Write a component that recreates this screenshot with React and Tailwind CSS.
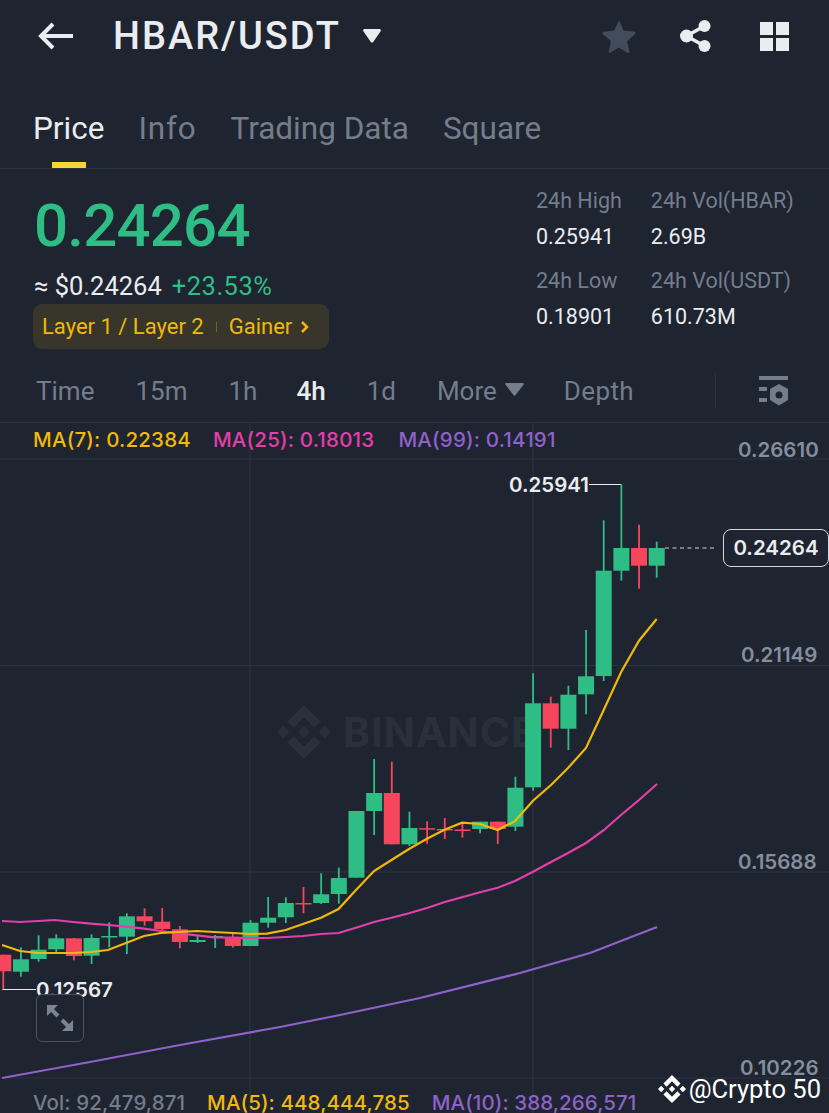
import { SiBinance } from 'react-icons/si'

const GREEN = '#2ebd85'
const RED = '#f6465d'

// k = bars back from the latest one. high, top, bottom, low are page y values.
const candles = [
  [541.7, 548, 565.7, 577.7, 'g'],
  [524.7, 548, 565.7, 588.7, 'r'],
  [484.3, 548, 570.7, 580.7, 'g'],
  [520.3, 570.7, 676, 681, 'g'],
  [630, 676.3, 694.3, 714.3, 'g'],
  [685.7, 694.7, 728.7, 750, 'g'],
  [696.7, 703.3, 728.7, 747.7, 'r'],
  [673.3, 703.3, 787.3, 790.7, 'g'],
  [776.7, 787.7, 826.7, 831, 'g'],
  [821.7, 821.7, 829, 844, 'r'],
  [821.7, 821.7, 829, 833.3, 'g'],
  [823, 829.5, 831, 837.7, 'r'],
  [818, 829, 830.5, 839, 'r'],
  [821.3, 828.2, 829.7, 843.7, 'r'],
  [811.7, 828, 844.3, 846, 'g'],
  [761.7, 793, 844.3, 844.3, 'r'],
  [759, 793, 811, 835, 'g'],
  [811, 811, 877.7, 877.7, 'g'],
  [867.7, 878, 894, 903.7, 'g'],
  [873.3, 894.3, 903, 904, 'g'],
  [887, 903, 904.5, 913.3, 'r'],
  [897.3, 903, 917.3, 923, 'g'],
  [897, 917.7, 922.7, 927.7, 'g'],
  [920, 922.7, 946, 946, 'g'],
  [934, 938, 946, 947.7, 'r'],
  [935, 936, 937.5, 948, 'g'],
  [935, 940, 942, 943, 'g'],
  [926, 929.3, 942, 948.3, 'r'],
  [908, 921.7, 929, 930, 'r'],
  [908.3, 916.3, 921.3, 925.7, 'r'],
  [913.3, 916.3, 936.7, 954, 'g'],
  [922.3, 936, 937.5, 947.3, 'g'],
  [934.3, 938, 955.7, 964, 'g'],
  [938, 938.3, 956, 960.3, 'r'],
  [934.3, 938.3, 949.3, 952, 'g'],
  [935.3, 949.7, 959, 961.7, 'g'],
  [947.3, 959.3, 971.7, 976.7, 'g'],
  [954.7, 954.7, 971.3, 989.3, 'r'],
]

const ma7 = '2,945 20,951 38,953 55,953 73,953 91,952 108,950 126,943 144,936 161,933 179,932 197,931 214,932 233,933 250,934 267,933.7 285.7,930 303,924 321,917.7 338.5,909 356,890 374,871 391.5,860 409,849 427,838.7 444,830 462,822.7 480,824 497.7,830 515,821 533,800.7 551,785 568,768 586,748 603.7,710 621.3,671.7 639,640.7 656.7,619'
const ma25 = '2,921 20,922 38,921 55,920 73,922 91,923.7 108,925 126,926.7 144,928.7 161,931 179,933.3 197,935.3 214,937.3 233,937.7 250,938 267,938 285.7,937 303,936 321,934 338.5,933 356,927.7 374,922 391.5,917.7 409,913.3 427,908 444,902.3 462,897.3 480,892.3 497.7,887.7 515,881 533,871.7 551,862 568,853 586,843 604,830 621,815 639,800 657,784'
const ma99 = '2,1078 90,1062 180,1045 280,1027 340,1015 420,998 520,973 590,953 657,927'

function ChartDrawing() {
  return (
    <svg className="absolute inset-0" width="829" height="690" viewBox="0 423 829 690">
      <g stroke="#2c3340" strokeWidth="1.2">
        <line x1="0" x2="829" y1="459" y2="459" />
        <line x1="0" x2="829" y1="665.5" y2="665.5" />
        <line x1="0" x2="829" y1="872" y2="872" />
        <line x1="0" x2="829" y1="1078" y2="1078" />
        <line x1="250" x2="250" y1="423" y2="1113" />
        <line x1="533" x2="533" y1="423" y2="1113" />
      </g>
      <line x1="589" x2="621.3" y1="484.5" y2="484.5" stroke="#eaecef" strokeWidth="1" />
      <polyline points="36,989.5 2.3,989.5" fill="none" stroke="#eaecef" strokeWidth="1" />
      {candles.map(([high, top, bottom, low, side], k) => {
        const x = 656.7 - 17.66 * k
        const color = side === 'g' ? GREEN : RED
        return (
          <g key={k} fill={color}>
            <rect x={x - 0.9} y={high} width="1.8" height={low - high} />
            <rect x={x - 8} y={top} width="16" height={bottom - top} />
          </g>
        )
      })}
      <polyline points={ma99} fill="none" stroke="#8f62c9" strokeWidth="2.2" />
      <polyline points={ma25} fill="none" stroke="#e33fa9" strokeWidth="2.2" />
      <polyline points={ma7} fill="none" stroke="#f0b90b" strokeWidth="2.2" />
      <line x1="665" x2="714" y1="548" y2="548" stroke="#d5d8dc" strokeWidth="1" strokeDasharray="4 3.5" />
    </svg>
  )
}

function Watermark() {
  return (
    <div className="absolute left-[277px] top-[282px] flex items-center gap-[12px] text-[#2a303b]">
      <SiBinance size={54} />
      <span className="font-['Inter',sans-serif] text-[41px] font-bold tracking-[1px] leading-none">BINANCE</span>
    </div>
  )
}

function PriceTag({ className, children }) {
  return (
    <span className={`absolute font-['Inter',sans-serif] text-[20.5px] font-semibold leading-none text-[#848e9c] ${className}`}>
      {children}
    </span>
  )
}

function Stat({ label, value }) {
  return (
    <div className="flex flex-col whitespace-nowrap">
      <span className="text-[21.5px] leading-[28px] text-[#747d8c]">{label}</span>
      <span className="mt-[8px] text-[21.5px] leading-[28px] text-[#eaecef]">{value}</span>
    </div>
  )
}

export default function App() {
  return (
    <div className="w-[829px] h-[1113px] overflow-hidden flex flex-col bg-[#1e2430] text-[#eaecef] font-['Roboto',sans-serif]">
      {/* top bar */}
      <div className="h-[72px] flex items-center pl-[38px] pr-[40px] shrink-0">
        <svg width="36" height="28" viewBox="0 0 36 28" fill="none" stroke="#eaecef" strokeWidth="4">
          <path d="M35 14H3" />
          <path d="M15 2L3 14l12 12" />
        </svg>
        <span className="ml-[39px] text-[38px] font-medium leading-none tracking-[2px]">HBAR/USDT</span>
        <svg className="ml-[22px]" width="18" height="14" viewBox="0 0 18 14" fill="#eaecef">
          <path d="M1.500 0h15c1.200 0 1.800 1.200 1.100 2.200L10.200 13c-.6.800-1.800.800-2.400 0L.4 2.200C-.3 1.200.3 0 1.500 0z" />
        </svg>
        <svg className="ml-auto" width="34" height="34" viewBox="0 0 24 24" fill="#434c5a">
          <path d="M12 .8l3.300 7.400 7.700.8c.7.100 1 1 .4 1.500l-5.700 5.200 1.600 7.400c.1.700-.6 1.200-1.200.9L12 20.200 5.900 23.800c-.6.300-1.300-.2-1.200-.9l1.600-7.400L.6 10.500C0 10 .3 9.100 1 9l7.700-.8L12 .8z" />
        </svg>
        <svg className="ml-[43px]" width="34" height="34" viewBox="0 0 34 34" fill="#eaecef" stroke="#eaecef">
          <circle cx="25.500" cy="7" r="6" stroke="none" />
          <circle cx="7.500" cy="17" r="6.500" stroke="none" />
          <circle cx="25.500" cy="27" r="6" stroke="none" />
          <path d="M25.500 7L7.500 17l18 10" fill="none" strokeWidth="3.500" />
        </svg>
        <div className="ml-[47px] grid grid-cols-2 gap-[3px] w-[29px]">
          <div className="h-[13px] bg-[#eaecef]" />
          <div className="h-[13px] bg-[#eaecef]" />
          <div className="h-[13px] bg-[#eaecef]" />
          <div className="h-[13px] bg-[#eaecef]" />
        </div>
      </div>

      {/* tabs */}
      <div className="h-[97px] shrink-0 flex items-start gap-[34px] pl-[33px] pt-[37px] border-b border-[#2c3340] text-[31.5px] leading-[40px] text-[#747d8c]">
        <div className="relative h-[59px] text-[#eaecef]">
          Price
          <div className="absolute left-[19px] top-[53px] w-[34px] h-[6px] bg-[#fcd535]" />
        </div>
        <span className="tracking-[0.8px]">Info</span>
        <span>Trading Data</span>
        <span>Square</span>
      </div>

      {/* ticker */}
      <div className="h-[188px] shrink-0 flex pl-[33px]">
        <div className="flex flex-col w-[296px] shrink-0">
          <div className="mt-[24px] text-[60px] font-medium leading-[66px] tracking-[-0.8px] pl-[1px] text-[#2ebd85]">0.24264</div>
          <div className="mt-[12px] flex items-center text-[25.5px] leading-[30px] pl-[1px]">
            <span>≈ $0.24264</span>
            <span className="ml-[10px] tracking-[0.5px] text-[#2ebd85]">+23.53%</span>
          </div>
          <div className="mt-[3px] w-[296px] h-[45px] flex items-center rounded-[9px] bg-[#38352a] pl-[9px] text-[22px] text-[#f0b90b]">
            <span>Layer 1 / Layer 2</span>
            <span className="mx-[12px] w-[1px] h-[10px] bg-[#6d6232]" />
            <span>Gainer</span>
            <svg className="ml-[8px]" width="10" height="14" viewBox="0 0 10 14" fill="none" stroke="#f0b90b" strokeWidth="2.500">
              <path d="M2 2l5 5-5 5" />
            </svg>
          </div>
        </div>
        <div className="ml-[207px] mt-[18px] flex gap-[29px]">
          <div className="flex flex-col gap-[16px]">
            <Stat label="24h High" value="0.25941" />
            <Stat label="24h Low" value="0.18901" />
          </div>
          <div className="flex flex-col gap-[16px]">
            <Stat label="24h Vol(HBAR)" value="2.69B" />
            <Stat label="24h Vol(USDT)" value="610.73M" />
          </div>
        </div>
      </div>

      {/* intervals */}
      <div className="h-[66px] shrink-0 flex items-center pl-[36px] pt-[2px] text-[26px] text-[#747d8c]">
        <span>Time</span>
        <span className="ml-[41px]">15m</span>
        <span className="ml-[41px]">1h</span>
        <span className="ml-[39px] font-medium text-[#eaecef]">4h</span>
        <span className="ml-[41px]">1d</span>
        <span className="ml-[41px]">More</span>
        <svg className="ml-[8px] mb-[4px]" width="19" height="13" viewBox="0 0 19 13" fill="#747d8c">
          <path d="M1 0h17c.8 0 1.200.8.7 1.400L10.200 12.400c-.4.500-1 .500-1.400 0L.3 1.400C-.2.8.2 0 1 0z" />
        </svg>
        <span className="ml-[40px] tracking-[0.4px]">Depth</span>
        <div className="ml-[81px] w-[1px] h-[36px] bg-[#2c3340]" />
        <svg className="ml-[43px]" width="30" height="30" viewBox="0 0 30 30" fill="#747d8c">
          <rect x="0" y="0" width="29" height="4" />
          <rect x="0" y="11" width="8" height="4" />
          <rect x="0" y="22" width="8" height="4" />
          <path fillRule="evenodd" d="M20 8l9 5v11l-9 5.500-9-5.500V13l9-5zm0 7.500a3.500 3.500 0 100 7 3.500 3.500 0 000-7z" />
        </svg>
      </div>

      {/* chart */}
      <div className="relative flex-1 border-t border-[#2c3340] -mt-[1px] font-['Inter',sans-serif]">
        <Watermark />
        <ChartDrawing />

        <div className="relative flex items-center h-[35px] pl-[33px] text-[20.5px] font-medium leading-none tracking-[0.2px]">
          <span className="text-[#f0b90b]">MA(7): 0.22384</span>
          <span className="ml-[22px] text-[#e33fa9]">MA(25): 0.18013</span>
          <span className="ml-[24px] text-[#8f62c9]">MA(99): 0.14191</span>
        </div>

        <PriceTag className="left-[738px] top-[17px]">0.26610</PriceTag>
        <PriceTag className="left-[741px] top-[222px]">0.21149</PriceTag>
        <PriceTag className="left-[738px] top-[429px]">0.15688</PriceTag>
        <PriceTag className="left-[740px] top-[635px]">0.10226</PriceTag>

        <PriceTag className="left-[509px] top-[52px] !text-[#eaecef]">0.25941</PriceTag>
        <PriceTag className="left-[36px] top-[557px] !text-[#eaecef]">0.12567</PriceTag>

        <div className="absolute left-[723px] top-[106px] w-[106px] h-[38px] flex items-center justify-center rounded-[8px] border-[1.5px] border-[#d5d8dc] bg-[#1e2430] text-[20.5px] font-semibold text-[#eaecef]">
          0.24264
        </div>

        <div className="absolute left-[36px] top-[571px] w-[48px] h-[48px] flex items-center justify-center rounded-[6px] border-[1.5px] border-[#4a5260] bg-[#1e2430]">
          <svg width="28" height="28" viewBox="0 0 28 28" fill="#7a8494" stroke="#7a8494">
            <path d="M1 1h11L1 12z" stroke="none" />
            <path d="M27 27H16l11-11z" stroke="none" />
            <path d="M5 5l7 7M16 16l7 7" fill="none" strokeWidth="4" />
          </svg>
        </div>

        <div className="absolute left-[33px] top-[670px] flex whitespace-nowrap text-[20.5px] font-medium leading-[19px] tracking-[0.1px]">
          <span className="text-[#747d8c]">Vol: 92,479,871</span>
          <span className="ml-[22px] text-[#f0b90b]">MA(5): 448,444,785</span>
          <span className="ml-[22px] text-[#8f62c9]">MA(10): 388,266,571</span>
        </div>

        <div className="absolute right-[8px] top-[652px] flex items-center gap-[3px] font-['Roboto',sans-serif] text-[25.5px] leading-[20px] text-white">
          <SiBinance size={28} />
          <span>@Crypto 50</span>
        </div>
      </div>
    </div>
  )
}
